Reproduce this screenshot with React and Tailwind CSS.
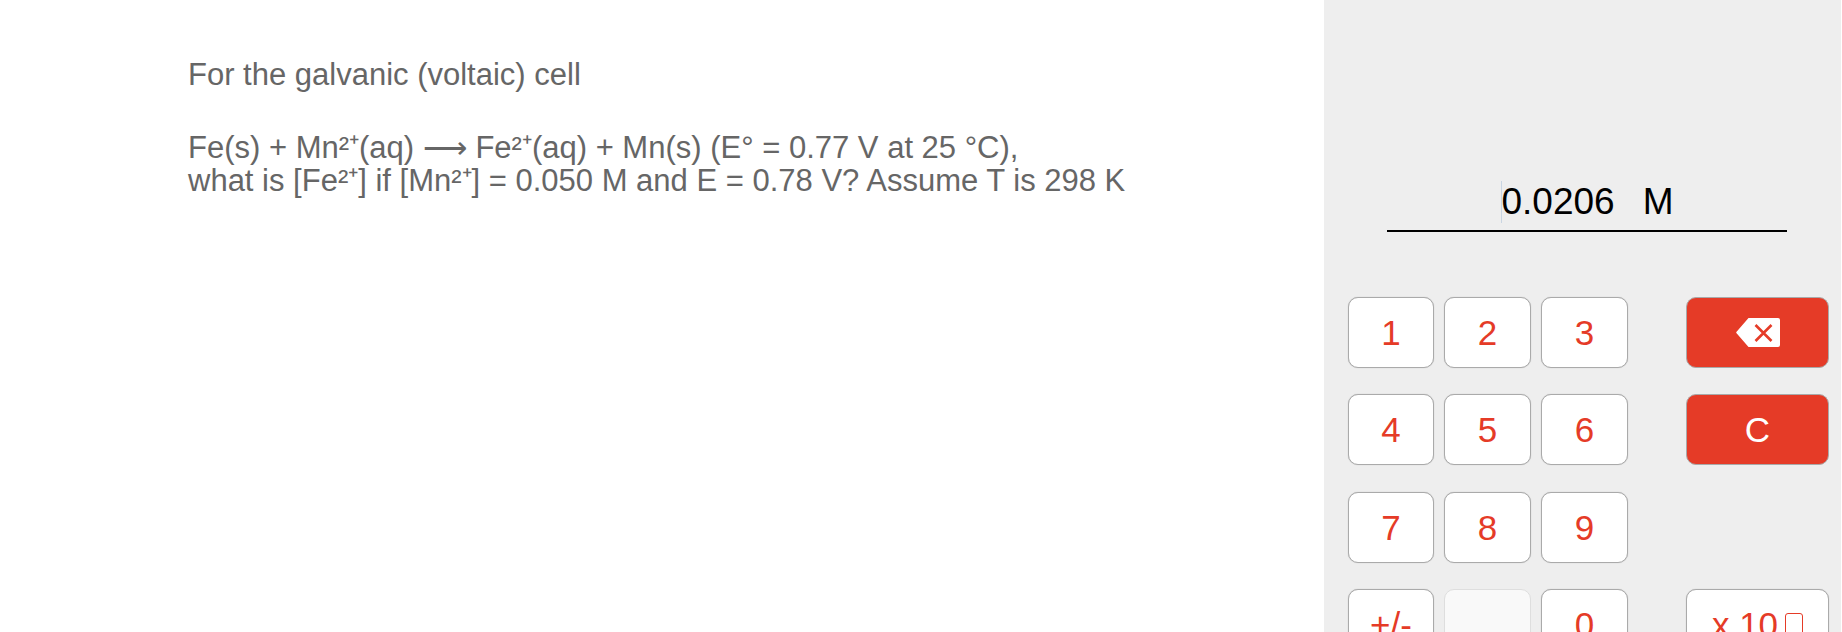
import React from "react";

const KeyButton = ({ children, disabled }) => {
  if (disabled) {
    return (
      <div className="h-[71px] rounded-[10px] border border-[#dedede] bg-[#f9f9f9]" />
    );
  }
  return (
    <button className="h-[71px] rounded-[10px] border border-[#aaaaaa] bg-white text-[35px] leading-none text-[#e53b27] shadow-[0_0_1px_rgba(0,0,0,0.25)] flex items-center justify-center">
      {children}
    </button>
  );
};

const BackspaceIcon = () => (
  <svg width="44" height="29" viewBox="0 0 44 29">
    <path
      d="M12.5 0 H42 a2 2 0 0 1 2 2 V27 a2 2 0 0 1 -2 2 H12.5 L0.8 15.6 a1.5 1.5 0 0 1 0 -2.2 Z"
      fill="#ffffff"
    />
    <path
      d="M19.5 7 L35.5 23 M35.5 7 L19.5 23"
      stroke="#e53b27"
      strokeWidth="2.6"
      fill="none"
    />
  </svg>
);

const App = () => {
  const digits = ["1", "2", "3", "4", "5", "6", "7", "8", "9"];

  return (
    <div
      className="flex h-[632px] w-full overflow-hidden bg-white"
      style={{ fontFamily: '"Liberation Sans", Arial, sans-serif' }}
    >
      {/* question */}
      <div className="flex-1 pl-[188px] pt-[57.6px] text-[31px] leading-[33px] text-[#666666]">
        <p className="mb-[40.4px]">For the galvanic (voltaic) cell</p>
        <p>
          Fe(s) + Mn²⁺(aq) ⟶ Fe²⁺(aq) + Mn(s) (E° = 0.77 V at 25 °C),
          <br />
          what is [Fe²⁺] if [Mn²⁺] = 0.050 M and E = 0.78 V? Assume T is 298 K
        </p>
      </div>

      {/* answer panel */}
      <div className="w-[517px] shrink-0 bg-[#eeeeee] pt-[181px]">
        <div className="ml-[63px] w-[400px] border-b-2 border-black pb-[6.5px] flex justify-center">
          <div className="flex items-start text-[37px] leading-[42px] text-black">
            <span className="inline-block w-px h-[42px] bg-[#c9d5e2]" />
            <span>0.0206</span>
            <span className="ml-[28px]">M</span>
          </div>
        </div>

        <div className="mt-[65.5px] pl-[24px] flex items-start">
          <div className="grid grid-cols-[86px_87px_87px] gap-x-[10px] gap-y-[26.3px]">
            {digits.map((d) => (
              <KeyButton key={d}>{d}</KeyButton>
            ))}
            <KeyButton>+/-</KeyButton>
            <KeyButton disabled />
            <KeyButton>0</KeyButton>
          </div>

          <div className="ml-[58px] w-[143px] flex flex-col gap-y-[26.3px]">
            <button className="h-[71px] rounded-[10px] border border-[#a9a9a9] bg-[#e53b27] flex items-center justify-center">
              <BackspaceIcon />
            </button>
            <button className="h-[71px] rounded-[10px] border border-[#a9a9a9] bg-[#e53b27] text-[35px] leading-none text-white flex items-center justify-center">
              C
            </button>
            <div className="h-[71px]" />
            <button className="h-[71px] rounded-[10px] border border-[#aaaaaa] bg-white text-[35px] leading-none text-[#e53b27] shadow-[0_0_1px_rgba(0,0,0,0.25)] flex items-center justify-center">
              <span>x 10</span>
              <span className="ml-[7px] inline-block w-[18px] h-[22px] rounded-[3px] border border-[#e53b27] self-start mt-[23px]" />
            </button>
          </div>
        </div>
      </div>
      <div className="w-px shrink-0 bg-white" />
    </div>
  );
};

export default App;
